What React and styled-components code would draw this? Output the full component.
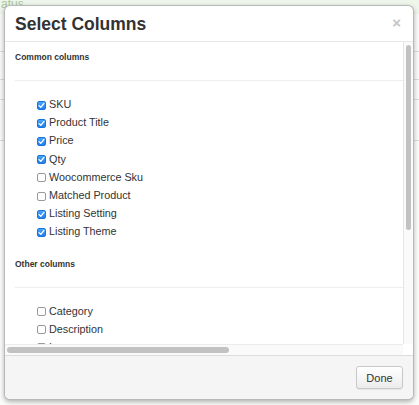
import React from 'react';
import styled, { createGlobalStyle } from 'styled-components';

const GlobalStyle = createGlobalStyle`
  html, body {
    margin: 0;
    padding: 0;
    background: #fbfdfa;
  }
  body {
    font-family: "Liberation Sans", Arial, Helvetica, sans-serif;
    color: #333;
  }
`;

const Page = styled.div`
  width: 419px;
  height: 405px;
  display: grid;
  overflow: hidden;
  background: #fbfdfa;
`;

// the page that sits behind the dialog
const Backdrop = styled.div`
  grid-area: 1 / 1;
  display: flex;
  flex-direction: column;
`;

const StatusStrip = styled.div`
  height: 14px;
  background: #eef5ea;
  color: #a9c6a1;
  font-size: 12px;
  line-height: 8px;
  padding-left: 1px;
  overflow: hidden;
`;

const BackRow = styled.div`
  height: ${p => p.h}px;
  border-bottom: 1px solid #dcdcdc;
  background: #fafafa;
`;

const Modal = styled.div`
  grid-area: 1 / 1;
  margin: 5px 5px 5px 4px;
  display: flex;
  flex-direction: column;
  background: #fff;
  border: 1px solid rgba(0, 0, 0, 0.28);
  border-radius: 6px;
  box-shadow: 0 2px 5px rgba(0, 0, 0, 0.3);
  overflow: hidden;
  min-height: 0;
`;

const Header = styled.div`
  height: 35px;
  flex: none;
  display: flex;
  align-items: center;
  justify-content: space-between;
  padding: 0 12px 0 10px;
  border-bottom: 1px solid #e8e8e8;
`;

const Title = styled.h3`
  margin: 0;
  font-size: 17.5px;
  font-weight: bold;
  color: #333;
  line-height: 20px;
`;

const Close = styled.span`
  font-size: 15px;
  font-weight: bold;
  color: #c4c4c4;
  line-height: 1;
  margin-top: -2px;
`;

const Body = styled.div`
  flex: 1;
  min-height: 0;
  display: grid;
  grid-template-columns: 1fr 10px;
  grid-template-rows: 1fr 11px;
`;

const Content = styled.div`
  overflow: hidden;
  padding: 9px 0 0 10px;
  min-height: 0;
`;

const Section = styled.div`
  & + & {
    margin-top: 17px;
  }
`;

const SectionTitle = styled.div`
  font-size: 8.5px;
  font-weight: bold;
  line-height: 12px;
  color: #333;
`;

const Divider = styled.div`
  margin-top: 17px;
  height: 1px;
  background: #eeeeee;
`;

const List = styled.div`
  margin-top: 14px;
  padding-left: 22px;
`;

const Row = styled.label`
  height: 18.2px;
  display: flex;
  align-items: center;
  font-size: 10.8px;
  color: #333;
  white-space: nowrap;
`;

const Box = styled.span`
  width: 9px;
  height: 9px;
  margin: 2px 3px 0 0;
  box-sizing: border-box;
  border-radius: 2px;
  display: flex;
  align-items: center;
  justify-content: center;
  flex: none;
  background: ${p => (p.checked ? 'linear-gradient(#4aa3fb, #1f80f0)' : '#fff')};
  border: 1px solid ${p => (p.checked ? '#1c74d8' : '#9a9a9a')};
`;

const VTrack = styled.div`
  background: #fafafa;
  border-left: 1px solid #e6e6e6;
  padding: 3px 2px 0 2px;
`;

const VThumb = styled.div`
  height: 185px;
  border-radius: 3px;
  background: #c2c2c2;
`;

const HTrack = styled.div`
  background: #fafafa;
  border-top: 1px solid #ececec;
  padding: 2px 0 0 2px;
`;

const HThumb = styled.div`
  width: 222px;
  height: 6px;
  border-radius: 3px;
  background: #c2c2c2;
`;

const Corner = styled.div`
  background: #fff;
`;

const Footer = styled.div`
  height: 43px;
  flex: none;
  display: flex;
  align-items: center;
  justify-content: flex-end;
  padding-right: 10px;
  background: #f5f5f5;
  border-top: 1px solid #dddddd;
`;

const Button = styled.button`
  width: 47px;
  height: 23px;
  font-family: inherit;
  font-size: 11px;
  color: #333;
  background: linear-gradient(#ffffff, #ececec);
  border: 1px solid #c8c8c8;
  border-radius: 3px;
  box-shadow: 0 1px 1px rgba(0, 0, 0, 0.06);
  padding: 0;
`;

const Check = ({ checked }) => (
  <Box checked={checked}>
    {checked && (
      <svg width="7" height="7" viewBox="0 0 7 7">
        <path d="M1 3.6 L2.8 5.3 L6 1.4" fill="none" stroke="#fff" strokeWidth="1.3" strokeLinecap="round" strokeLinejoin="round" />
      </svg>
    )}
  </Box>
);

const sections = [
  {
    title: 'Common columns',
    items: [
      ['SKU', true],
      ['Product Title', true],
      ['Price', true],
      ['Qty', true],
      ['Woocommerce Sku', false],
      ['Matched Product', false],
      ['Listing Setting', true],
      ['Listing Theme', true],
    ],
  },
  {
    title: 'Other columns',
    items: [
      ['Category', false],
      ['Description', false],
      ['Image', false],
      ['Weight', false],
    ],
  },
];

export default function App() {
  return (
    <>
      <GlobalStyle />
      <Page>
        <Backdrop>
          <StatusStrip>atus.</StatusStrip>
          <BackRow h={37} />
          <BackRow h={27} />
          <BackRow h={19} />
          <BackRow h={40} />
        </Backdrop>
        <Modal>
          <Header>
            <Title>Select Columns</Title>
            <Close>×</Close>
          </Header>
          <Body>
            <Content>
              {sections.map(s => (
                <Section key={s.title}>
                  <SectionTitle>{s.title}</SectionTitle>
                  <Divider />
                  <List>
                    {s.items.map(([label, checked]) => (
                      <Row key={label}>
                        <Check checked={checked} />
                        {label}
                      </Row>
                    ))}
                  </List>
                </Section>
              ))}
            </Content>
            <VTrack>
              <VThumb />
            </VTrack>
            <HTrack>
              <HThumb />
            </HTrack>
            <Corner />
          </Body>
          <Footer>
            <Button>Done</Button>
          </Footer>
        </Modal>
      </Page>
    </>
  );
}
